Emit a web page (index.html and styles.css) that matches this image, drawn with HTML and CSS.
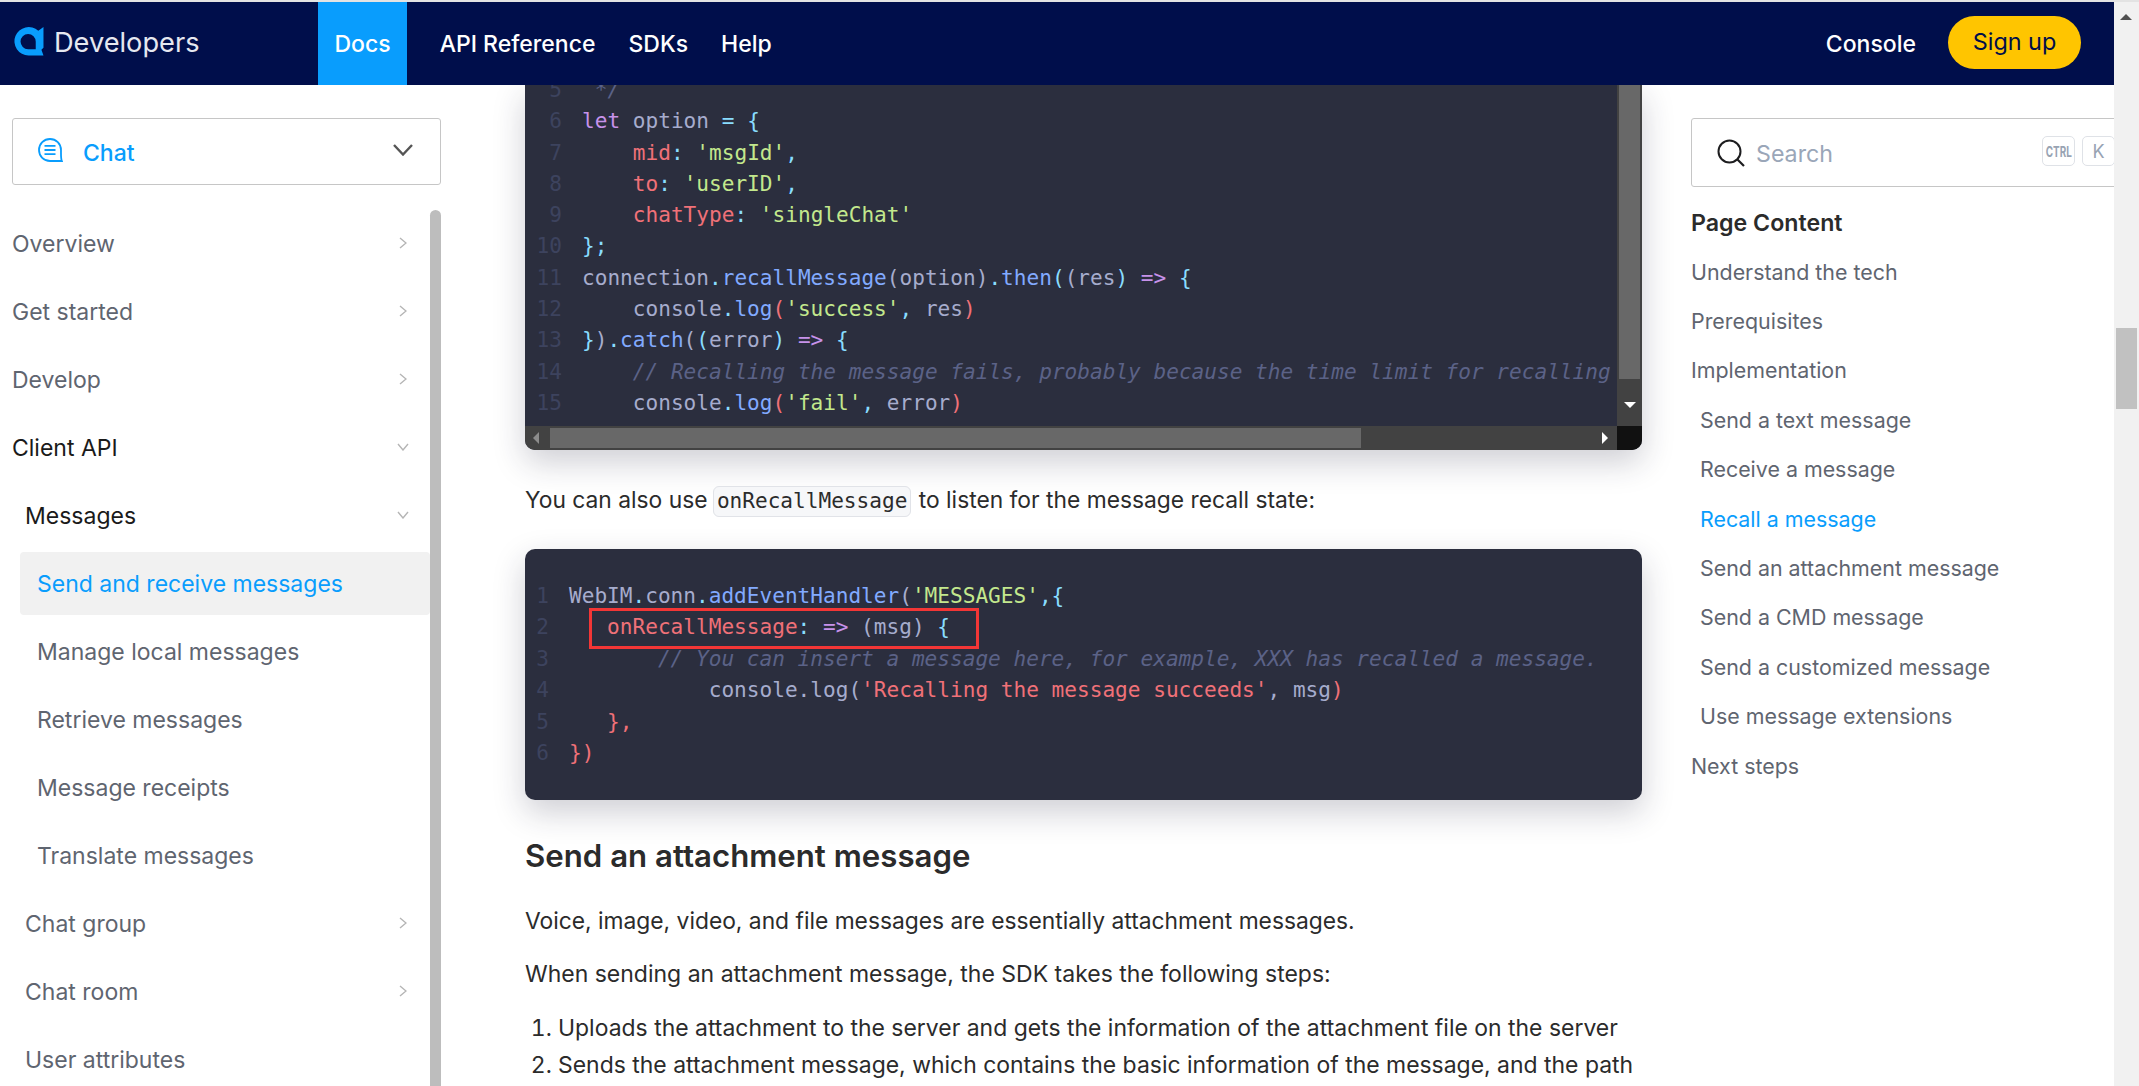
FILE: index.html
```html
<!DOCTYPE html>
<html lang="en">
<head>
<meta charset="utf-8">
<title>Developers - Send and receive messages</title>
<link rel="stylesheet" href="styles.css">
</head>
<body>
<div class="page">
  <div class="viewport">
    <header class="topbar">
      <a class="brand">
        <svg class="logo" viewBox="0 0 30 28"><path d="M29.5 0 L24.5 3.6 A13.8 13.8 0 1 0 15 27.6 L29.5 27.6 L27.5 22 L29.5 20 Z M14.6 6.8 A7.4 7.4 0 0 1 22 14.2 L22 21.4 L14.6 21.4 A7.3 7.3 0 0 1 14.6 6.8 Z" fill="#099dfd" fill-rule="evenodd"/></svg>
        <span class="brand-name">Developers</span>
      </a>
      <nav class="topnav">
        <a class="tab active">Docs</a>
        <a class="tab">API Reference</a>
        <a class="tab">SDKs</a>
        <a class="tab">Help</a>
      </nav>
      <div class="top-actions">
        <a class="console">Console</a>
        <a class="signup">Sign up</a>
      </div>
    </header>

    <div class="columns">
      <aside class="sidebar">
        <div class="product">
          <svg class="chat-icon" viewBox="0 0 26 26"><path d="M13 2 A11 11 0 0 0 13 24 L24.8 24 C23.8 22 24 18 24 13 A11 11 0 0 0 13 2 Z" fill="none" stroke="#099dfd" stroke-width="1.8"/><path d="M7.5 8.8H18.5M7.5 13H18.5M7.5 17.2H18.5" stroke="#099dfd" stroke-width="1.8" fill="none"/></svg>
          <span class="product-name">Chat</span>
          <svg class="product-caret" viewBox="0 0 20 12"><path d="M1 1 L10 10.5 L19 1" fill="none" stroke="#555" stroke-width="2.4"/></svg>
        </div>
        <div class="nav-wrap">
          <ul class="tree">
            <li class="node">Overview<svg class="chev" viewBox="0 0 8 12"><path d="M1 1 L7 6 L1 11" /></svg></li>
            <li class="node">Get started<svg class="chev" viewBox="0 0 8 12"><path d="M1 1 L7 6 L1 11" /></svg></li>
            <li class="node">Develop<svg class="chev" viewBox="0 0 8 12"><path d="M1 1 L7 6 L1 11" /></svg></li>
            <li class="node open">Client API<svg class="chev down" viewBox="0 0 12 8"><path d="M1 1 L6 7 L11 1" /></svg></li>
            <li class="node open sub">Messages<svg class="chev down" viewBox="0 0 12 8"><path d="M1 1 L6 7 L11 1" /></svg></li>
            <li class="node leaf current"><span class="current-label">Send and receive messages</span></li>
            <li class="node leaf">Manage local messages</li>
            <li class="node leaf">Retrieve messages</li>
            <li class="node leaf">Message receipts</li>
            <li class="node leaf">Translate messages</li>
            <li class="node sub">Chat group<svg class="chev" viewBox="0 0 8 12"><path d="M1 1 L7 6 L1 11" /></svg></li>
            <li class="node sub">Chat room<svg class="chev" viewBox="0 0 8 12"><path d="M1 1 L7 6 L1 11" /></svg></li>
            <li class="node sub">User attributes</li>
          </ul>
          <div class="nav-thumb"></div>
        </div>
      </aside>

      <main class="content">
        <div class="code-scroll">
          <div class="code-view">
            <div class="ln"><span class="no">5</span><span class="c"> */</span></div>
            <div class="ln"><span class="no">6</span><span><span class="k">let</span> option <span class="o">=</span> <span class="p">{</span></span></div>
            <div class="ln"><span class="no">7</span><span>    <span class="r">mid</span><span class="p">:</span> <span class="s">'msgId'</span><span class="p">,</span></span></div>
            <div class="ln"><span class="no">8</span><span>    <span class="r">to</span><span class="p">:</span> <span class="s">'userID'</span><span class="p">,</span></span></div>
            <div class="ln"><span class="no">9</span><span>    <span class="r">chatType</span><span class="p">:</span> <span class="s">'singleChat'</span></span></div>
            <div class="ln"><span class="no">10</span><span><span class="p">};</span></span></div>
            <div class="ln"><span class="no">11</span><span>connection<span class="p">.</span><span class="f">recallMessage</span>(option)<span class="p">.</span><span class="f">then</span><span class="p">(</span>(res<span class="p">)</span> <span class="k">=&gt;</span> <span class="p">{</span></span></div>
            <div class="ln"><span class="no">12</span><span>    console<span class="p">.</span><span class="f">log</span><span class="r">(</span><span class="s">'success'</span><span class="p">,</span> res<span class="r">)</span></span></div>
            <div class="ln"><span class="no">13</span><span><span class="p">}</span>)<span class="p">.</span><span class="f">catch</span>(<span class="p">(</span>error<span class="p">)</span> <span class="k">=&gt;</span> <span class="p">{</span></span></div>
            <div class="ln"><span class="no">14</span><span class="c">    // Recalling the message fails, probably because the time limit for recalling</span></div>
            <div class="ln"><span class="no">15</span><span>    console<span class="p">.</span><span class="f">log</span><span class="r">(</span><span class="s">'fail'</span><span class="p">,</span> error<span class="r">)</span></span></div>
          </div>
          <div class="vbar"><div class="vthumb"></div><div class="arrow-down"></div></div>
          <div class="hbar"><div class="arrow-left"></div><div class="hthumb"></div><div class="arrow-right"></div></div>
          <div class="corner"></div>
        </div>

        <p class="para first">You can also use <code class="chip">onRecallMessage</code> to listen for the message recall state:</p>

        <div class="code-block">
          <div class="ln"><span class="no">1</span><span>WebIM<span class="p">.</span>conn<span class="p">.</span><span class="f">addEventHandler</span>(<span class="s">'MESSAGES'</span><span class="p">,{</span></span></div>
          <div class="ln"><span class="no">2</span><span>   <span class="r">onRecallMessage</span><span class="p">:</span> <span class="k">=&gt;</span> (msg) <span class="p">{</span></span></div>
          <div class="ln"><span class="no">3</span><span class="c">       // You can insert a message here, for example, XXX has recalled a message.</span></div>
          <div class="ln"><span class="no">4</span><span>           console.log(<span class="r">'Recalling the message succeeds'</span>, msg<span class="r">)</span></span></div>
          <div class="ln"><span class="no">5</span><span class="r">   },</span></div>
          <div class="ln"><span class="no">6</span><span class="r">})</span></div>
          <div class="redbox"></div>
        </div>

        <h2 class="heading">Send an attachment message</h2>
        <p class="para">Voice, image, video, and file messages are essentially attachment messages.</p>
        <p class="para step">When sending an attachment message, the SDK takes the following steps:</p>
        <ol class="steps">
          <li>Uploads the attachment to the server and gets the information of the attachment file on the server</li>
          <li>Sends the attachment message, which contains the basic information of the message, and the path</li>
        </ol>
      </main>

      <aside class="rail">
        <div class="search">
          <svg class="search-icon" viewBox="0 0 28 28"><circle cx="12.5" cy="12.5" r="11" fill="none" stroke="#1d1d1f" stroke-width="2"/><path d="M20.5 20.5 L27 27" stroke="#1d1d1f" stroke-width="2.2"/></svg>
          <span class="search-text">Search</span>
          <span class="key ctrl"><span class="key-narrow">CTRL</span></span>
          <span class="key letter">K</span>
        </div>
        <div class="toc-title">Page Content</div>
        <ul class="toc">
          <li>Understand the tech</li>
          <li>Prerequisites</li>
          <li>Implementation</li>
          <li class="in">Send a text message</li>
          <li class="in">Receive a message</li>
          <li class="in on">Recall a message</li>
          <li class="in">Send an attachment message</li>
          <li class="in">Send a CMD message</li>
          <li class="in">Send a customized message</li>
          <li class="in">Use message extensions</li>
          <li>Next steps</li>
        </ul>
      </aside>
    </div>
  </div>
  <div class="pagebar"><div class="page-up"></div><div class="page-thumb"></div></div>
</div>
</body>
</html>
```
FILE: styles.css
```css
* { box-sizing: border-box; }
html, body { margin: 0; padding: 0; height: 100%; overflow: hidden; }
body { font-family: Inter, "Liberation Sans", sans-serif; background: #fff; color: #333; }
ul, ol { margin: 0; padding: 0; list-style: none; }

.page { display: flex; height: 1086px; padding-top: 2px; background: #e3e3e3; }
.viewport { width: 2114px; background: #fff; display: flex; flex-direction: column; overflow: hidden; }

.topbar { flex: 0 0 83px; display: flex; align-items: stretch; background: #000e4b; color: #fff; position: relative; z-index: 2; }
.brand { width: 318px; display: flex; align-items: center; padding-left: 13px; padding-bottom: 3px; }
.logo { width: 31px; height: 29px; margin-bottom: 1px; }
.brand-name { margin-left: 10px; font-size: 27.2px; color: #e6e8f0; }
.topnav { display: flex; }
.tab { display: flex; align-items: center; padding: 0 16.5px; font-size: 23px; font-weight: 500; color: #fff; }
.tab.active { background: #099dfd; margin-right: 16px; }
.top-actions { margin-left: auto; display: flex; align-items: center; padding-right: 33px; }
.console { font-size: 23px; font-weight: 500; margin-right: 32px; }
.signup { width: 133px; height: 53px; border-radius: 27px; background: #ffc500; color: #000e4b; font-size: 23.4px; font-weight: 400; display: flex; align-items: center; justify-content: center; padding-bottom: 2px; margin-bottom: 3px; }

.columns { flex: 1; display: flex; min-height: 0; }

.sidebar { width: 525px; flex: none; padding: 33px 0 0 12px; overflow: hidden; }
.product { width: 429px; height: 67px; border: 1px solid #c6c6c6; border-radius: 3px; display: flex; align-items: center; padding-left: 24px; }
.chat-icon { width: 26px; height: 26px; margin-bottom: 3px; }
.product-name { margin-left: 20px; padding-top: 2px; font-size: 23px; font-weight: 500; color: #099dfd; }
.product-caret { width: 20px; height: 12px; margin-left: auto; margin-right: 27px; margin-bottom: 4px; }

.nav-wrap { display: flex; width: 429px; margin-top: 25px; height: 900px; }
.tree { width: 418px; font-size: 23px; color: #5f6570; }
.node { height: 68px; display: flex; align-items: center; position: relative; padding-bottom: 1px; }
.node.open { color: #1a1a1a; }
.node.sub { padding-left: 13px; }
.node.leaf { padding-left: 25px; }
.node.current { padding-left: 8px; }
.current-label { flex: 1; height: 63px; display: flex; align-items: center; padding-left: 17px; background: #f1f1f1; border-radius: 4px; color: #099dfd; }
.chev { position: absolute; right: 23px; top: 27px; width: 8px; height: 12px; fill: none; stroke: #b5b5b5; stroke-width: 1.4; }
.chev.down { width: 12px; height: 8px; right: 21px; top: 29px; }
.nav-thumb { width: 11px; background: #bdbdbd; border-radius: 6px 6px 0 0; }

.content { width: 1117px; flex: none; font-size: 22.8px; }
.code-scroll, .code-block { background: #2b2e3e; font-family: "DejaVu Sans Mono", monospace; font-size: 21.1px; color: #a6accd; box-shadow: 0 12px 32px rgba(30, 34, 60, .22); }
.code-scroll { height: 365px; display: grid; grid-template-columns: 1fr 25px; grid-template-rows: 1fr 24px; border-radius: 0 0 10px 10px; overflow: hidden; }
.code-view { overflow: hidden; }
.code-view .ln { height: 31.3px; line-height: 31.3px; }
.code-view .ln:first-child { margin-top: -11px; }
.ln { display: flex; height: 31.4px; line-height: 31.4px; white-space: pre; }
.no { width: 37px; margin-right: 20px; text-align: right; color: #3d435e; flex: none; }
.code-block .no { width: 24px; margin-right: 20px; }
.c { color: #5b6287; font-style: italic; }
.k { color: #c792ea; }
.o { color: #89ddff; }
.p { color: #89ddff; }
.r { color: #f07178; }
.s { color: #c3e88d; }
.f { color: #82aaff; }

.vbar { background: #424242; position: relative; padding: 0 2px; }
.vthumb { height: 294px; background: #686868; }
.arrow-down { position: absolute; left: 7px; bottom: 18px; border-left: 6px solid transparent; border-right: 6px solid transparent; border-top: 6px solid #fff; }
.hbar { background: #424242; position: relative; padding: 2px 0 2px 25px; }
.hthumb { width: 811px; height: 20px; background: #686868; }
.arrow-left { position: absolute; left: 8px; top: 6px; border-top: 6px solid transparent; border-bottom: 6px solid transparent; border-right: 6px solid #8c8c8c; }
.arrow-right { position: absolute; right: 9px; top: 6px; border-top: 6px solid transparent; border-bottom: 6px solid transparent; border-left: 6px solid #fff; }
.corner { background: #111; }

.para { margin: 0; line-height: 32px; color: #2b2b2b; }
.para.first { margin-top: 34px; }
.chip { font-family: "DejaVu Sans Mono", monospace; font-size: 21.1px; padding: 1px 3px 3px; margin: 0 1px 0 -1px; border: 1px solid #e1e3e8; border-radius: 6px; background: #f6f7f9; color: #2b2b2b; }
.code-block { position: relative; height: 251px; margin-top: 32px; padding-top: 31px; border-radius: 10px; }
.redbox { position: absolute; left: 64px; top: 59px; width: 390px; height: 41px; border: 3px solid #f33636; }

.heading { margin: 36px 0 0; font-size: 31.2px; line-height: 40px; font-weight: 600; color: #2b2b2b; }
.heading + .para { margin-top: 29px; }
.para.step { margin-top: 21px; font-size: 23px; }
.steps { margin-top: 20px; list-style: decimal; padding-left: 33px; font-size: 22.95px; }
.steps li { line-height: 37px; color: #2b2b2b; white-space: nowrap; }

.rail { flex: 1; min-width: 0; padding: 33px 0 0 49px; }
.search { width: 440px; height: 69px; border: 1px solid #c6c6c6; border-radius: 3px; display: flex; align-items: center; padding: 0 15px 0 25px; }
.search-icon { width: 28px; height: 28px; }
.search-text { margin-left: 11px; padding-top: 2px; font-size: 23.2px; color: #9aa6b8; }
.key { width: 33px; height: 30px; border: 1px solid #dfe2e7; border-radius: 5px; display: flex; align-items: center; justify-content: center; color: #98a3b3; margin-bottom: 3px; flex: none; }
.key.ctrl { margin-left: auto; margin-right: 7px; }
.key.letter { font-size: 18px; }
.key-narrow { font-size: 15px; font-weight: 700; transform: scaleX(.66); }
.toc-title { margin-top: 20px; font-size: 23.2px; font-weight: 600; color: #2b2b2b; line-height: 32px; }
.toc { margin-top: 8px; font-size: 21.4px; color: #5f6570; }
.toc li { height: 49.4px; display: flex; align-items: center; }
.toc .in { padding-left: 9px; }
.toc .on { color: #099dfd; }

.pagebar { width: 25px; background: #f1f1f1; position: relative; }
.page-up { position: absolute; left: 6px; top: 12px; border-left: 6px solid transparent; border-right: 6px solid transparent; border-bottom: 6px solid #505050; }
.page-thumb { position: absolute; left: 2px; right: 2px; top: 326px; height: 81px; background: #c1c1c1; }
```
